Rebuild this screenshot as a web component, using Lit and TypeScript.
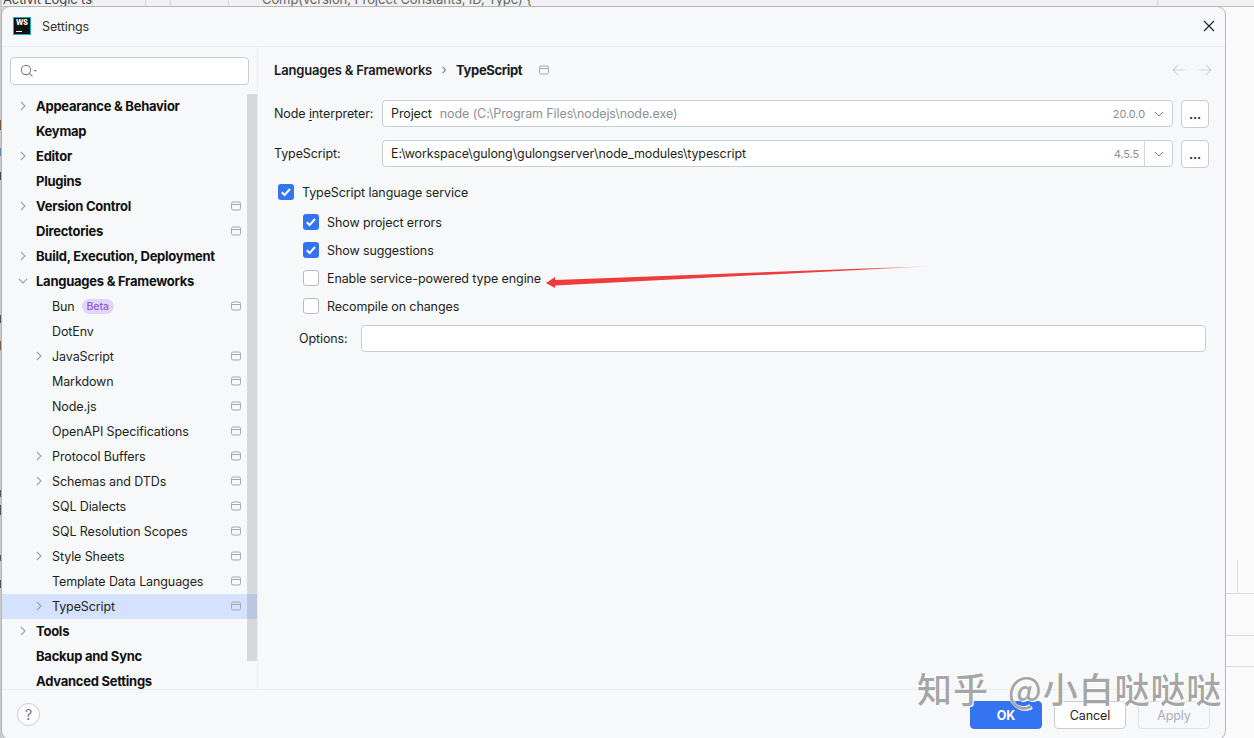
import { LitElement, html, css, svg } from "lit";
import { customElement } from "lit/decorators.js";

type Row = { t: string; lvl: 0 | 1; arrow?: "r" | "d"; icon?: boolean; beta?: boolean; sel?: boolean };

const ROWS: Row[] = [
  { t: "Appearance & Behavior", lvl: 0, arrow: "r" },
  { t: "Keymap", lvl: 0 },
  { t: "Editor", lvl: 0, arrow: "r" },
  { t: "Plugins", lvl: 0 },
  { t: "Version Control", lvl: 0, arrow: "r", icon: true },
  { t: "Directories", lvl: 0, icon: true },
  { t: "Build, Execution, Deployment", lvl: 0, arrow: "r" },
  { t: "Languages & Frameworks", lvl: 0, arrow: "d" },
  { t: "Bun", lvl: 1, icon: true, beta: true },
  { t: "DotEnv", lvl: 1 },
  { t: "JavaScript", lvl: 1, arrow: "r", icon: true },
  { t: "Markdown", lvl: 1, icon: true },
  { t: "Node.js", lvl: 1, icon: true },
  { t: "OpenAPI Specifications", lvl: 1, icon: true },
  { t: "Protocol Buffers", lvl: 1, arrow: "r", icon: true },
  { t: "Schemas and DTDs", lvl: 1, arrow: "r", icon: true },
  { t: "SQL Dialects", lvl: 1, icon: true },
  { t: "SQL Resolution Scopes", lvl: 1, icon: true },
  { t: "Style Sheets", lvl: 1, arrow: "r", icon: true },
  { t: "Template Data Languages", lvl: 1, icon: true },
  { t: "TypeScript", lvl: 1, arrow: "r", icon: true, sel: true },
  { t: "Tools", lvl: 0, arrow: "r" },
  { t: "Backup and Sync", lvl: 0 },
  { t: "Advanced Settings", lvl: 0 },
];

const TICKS: [number, number, string][] = [
  [120, 10, "#7a5a3a"],
  [148, 8, "#5f8bb0"],
  [172, 8, "#444"],
  [315, 8, "#555"],
  [341, 9, "#8a5a40"],
  [490, 7, "#555"],
  [505, 10, "#555"],
  [555, 6, "#555"],
  [580, 8, "#555"],
];

const chevR = svg`<svg width="10" height="10" viewBox="0 0 10 10" fill="none" stroke="#9da0a8" stroke-width="1.1"><path d="M3 1l4 4-4 4"/></svg>`;
const chevD = svg`<svg width="10" height="10" viewBox="0 0 10 10" fill="none" stroke="#9da0a8" stroke-width="1.1"><path d="M1 3l4 4 4-4"/></svg>`;
const proj = svg`<svg width="10" height="10" viewBox="0 0 10 10" fill="none" stroke="#a4a7ad" stroke-width="1"><rect x="0.5" y="1" width="9" height="8" rx="1.5"/><path d="M0.5 3.5h9"/></svg>`;
const check = svg`<svg width="16" height="16" viewBox="0 0 16 16" fill="none" stroke="#fff" stroke-width="2"><path d="M3.8 8.2l2.8 2.8 5.4-6"/></svg>`;
const combo = svg`<svg width="10" height="10" viewBox="0 0 10 10" fill="none" stroke="#7d8087" stroke-width="1"><path d="M1 3l4 4 4-4"/></svg>`;

@customElement("app-root")
export class AppRoot extends LitElement {
  static styles = css`
    :host {
      display: block;
      width: 1254px;
      height: 738px;
      overflow: hidden;
      font-family: "Inter", "Noto Sans", sans-serif;
      font-size: 12.5px;
      letter-spacing: -0.1px;
      color: #1e1f22;
    }
    svg { display: block; }
    .desk {
      position: relative;
      width: 1254px;
      height: 738px;
      overflow: hidden;
      background: linear-gradient(90deg, #d4d4d4 0, #ececec 14px, #fafafa 29px);
    }
    .strip {
      position: absolute;
      left: 0;
      top: 0;
      width: 1254px;
      height: 7px;
      background: #f1f1f1;
      border-bottom: 1px solid #bdbdbd;
      box-sizing: border-box;
      overflow: hidden;
    }
    .strip span {
      position: absolute;
      top: -9px;
      font-size: 13px;
      color: #444;
      white-space: nowrap;
    }
    .strip .a { left: 3px; }
    .strip .b { left: 262px; color: #666; }
    .strip i {
      position: absolute;
      top: 0;
      width: 1px;
      height: 7px;
      background: #d8d8d8;
    }
    .rowline {
      position: absolute;
      left: 1226px;
      width: 28px;
      height: 1px;
      background: #dadada;
    }
    .vline {
      position: absolute;
      left: 1237px;
      top: 560px;
      width: 1px;
      height: 33px;
      background: #dadada;
    }
    .leftedge {
      position: absolute;
      left: 0;
      top: 0;
      width: 2px;
      height: 738px;
      background: #c9c9c9;
    }
    .tick {
      position: absolute;
      left: 0;
      width: 1px;
    }
    .dialog {
      position: absolute;
      left: 2px;
      top: 7px;
      width: 1223px;
      height: 732px;
      box-sizing: border-box;
      background: #f7f8fa;
      border-radius: 8px;
      box-shadow: 0 0 0 1px #b4b6ba;
      display: flex;
      flex-direction: column;
    }
    .title {
      height: 40px;
      flex: none;
      box-sizing: border-box;
      display: flex;
      align-items: center;
      padding: 0 8px 1px 12px;
      border-bottom: 1px solid #ebecf0;
    }
    .logo {
      width: 16px;
      height: 16px;
      background: #111;
      box-shadow: 0 0 0 1px #20a9c9;
      color: #fff;
      font-size: 7px;
      font-weight: 800;
      line-height: 9px;
      padding-left: 2px;
      box-sizing: border-box;
      position: relative;
      letter-spacing: -0.2px;
      flex: none;
    }
    .logo i {
      position: absolute;
      left: 2px;
      bottom: 2px;
      width: 6px;
      height: 1px;
      background: #fff;
    }
    .title .name {
      margin-left: 12px;
      flex: 1;
      color: #333;
    }
    .x { width: 12px; height: 12px; margin-right: 2px; }
    .body {
      flex: none;
      height: 642px;
      display: flex;
    }
    .side {
      width: 256px;
      flex: none;
      box-sizing: border-box;
      border-right: 1px solid #ebecf0;
      display: flex;
      flex-direction: column;
      position: relative;
      overflow: hidden;
    }
    .search {
      margin: 10px 8px 0 8px;
      height: 28px;
      flex: none;
      box-sizing: border-box;
      width: 239px;
      background: #fff;
      border: 1px solid #c9ccd6;
      border-radius: 4px;
      display: flex;
      align-items: center;
      padding-left: 9px;
    }
    .tree { margin-top: 9px; position: relative; }
    .row {
      height: 25px;
      box-sizing: border-box;
      padding-bottom: 1px;
      display: flex;
      align-items: center;
      position: relative;
      white-space: nowrap;
    }
    .row.sel { background: #d4e2ff; }
    .row .arr {
      position: absolute;
      top: 7px;
      width: 10px;
      height: 10px;
      display: block;
    }
    .row.l0 .arr { left: 16px; }
    .row.l1 .arr { left: 32px; }
    .row.l0 .txt { margin-left: 34px; font-weight: 700; font-size: 13px; letter-spacing: -0.25px; color: #111; }
    .row.l1 .txt { margin-left: 50px; }
    .beta {
      margin-left: 7px;
      width: 32px;
      text-align: center;
      background: #e3d5f8;
      color: #8a5cd0;
      font-size: 10.5px;
      font-weight: 500;
      border-radius: 8px;
      height: 15px;
      line-height: 15px;
    }
    .row .pi { position: absolute; left: 229px; top: 7px; display: block; }
    .thumb {
      position: absolute;
      left: 245px;
      top: 0;
      width: 10px;
      height: 567px;
      background: rgba(100, 105, 115, 0.22);
    }
    .main {
      flex: 1;
      position: relative;
      padding: 0 16px;
      box-sizing: border-box;
      min-width: 0;
    }
    .crumb {
      height: 53px;
      box-sizing: border-box;
      padding-top: 15px;
    }
    .crumbin {
      height: 16px;
      display: flex;
      align-items: center;
      font-weight: 700;
      font-size: 13px;
      letter-spacing: -0.18px;
      color: #1a1b1e;
    }
    .crumbin .lang { font-weight: 600; }
    .crumbin .sep { margin: 0 9px; flex: none; }
    .crumbin .cur { letter-spacing: -0.35px; }
    .crumbin .pi { margin-left: 17px; }
    .crumbin .nav { margin-left: auto; margin-right: -3px; display: flex; gap: 12px; }
    .field {
      display: flex;
      align-items: center;
      height: 27px;
      margin-bottom: 13px;
      width: 935px;
    }
    .lab { width: 108px; flex: none; }
    .lab u { text-underline-offset: 2px; }
    .inp {
      flex: none;
      width: 791px;
      height: 27px;
      box-sizing: border-box;
      background: #fff;
      border: 1px solid #c9ccd6;
      border-radius: 4px;
      display: flex;
      align-items: center;
      padding-left: 8px;
      white-space: nowrap;
    }
    .inp .dim { color: #8c8f96; margin-left: 8px; }
    .inp .ver { margin-left: auto; color: #8c8f96; font-size: 11px; }
    .inp .ch { display: block; margin: 0 8px 0 9px; }
    .inp .sp { width: 27px; height: 25px; border-left: 1px solid #d3d5db; margin-left: 5px; display: flex; align-items: center; justify-content: center; flex: none; }
    .dots {
      margin-left: 8px;
      width: 28px;
      height: 28px;
      box-sizing: border-box;
      background: #fff;
      border: 1px solid #c9ccd6;
      border-radius: 4px;
      text-align: center;
      font-size: 13px;
      line-height: 26px;
      font-weight: 600;
    }
    .checks { margin-top: -3px; }
    .cb { display: flex; align-items: center; height: 28px; }
    .cb.top { margin: 0 0 1px 4px; height: 30px; }
    .cb.sub { margin-left: 29px; }
    .box {
      width: 16px;
      height: 16px;
      box-sizing: border-box;
      border-radius: 3px;
      background: #fff;
      border: 1px solid #b9bcc3;
      margin-right: 8px;
      flex: none;
    }
    .box.on { background: #3574f0; border: none; }
    .opts { display: flex; align-items: center; margin: 5px 0 0 25px; height: 27px; }
    .opts .lab2 { width: 62px; flex: none; }
    .opts .inp { width: 845px; }
    .arrow { position: absolute; left: 285px; top: 218px; pointer-events: none; }
    .foot {
      flex: none;
      height: 50px;
      border-top: 1px solid #ebecf0;
      display: flex;
      align-items: center;
      padding: 0 15px;
      box-sizing: border-box;
      position: relative;
    }
    .help {
      width: 23px;
      height: 23px;
      box-sizing: border-box;
      border-radius: 50%;
      border: 1px solid #c9ccd6;
      background: #fff;
      color: #6c707e;
      text-align: center;
      line-height: 21px;
      font-size: 14px;
      flex: none;
    }
    .btns { margin-left: auto; display: flex; gap: 12px; }
    .btn {
      width: 72px;
      height: 28px;
      box-sizing: border-box;
      border-radius: 4px;
      border: 1px solid #c9ccd6;
      background: #fff;
      text-align: center;
      line-height: 27px;
    }
    .btn.ok { background: #3574f0; border-color: #3574f0; color: #fff; font-weight: 700; }
    .btn.off { background: transparent; border-color: #dfe1e5; color: #a8adbd; }
    .mark {
      position: absolute;
      left: 917px;
      top: 670px;
      font-family: "Noto Sans CJK SC", sans-serif;
      font-size: 35px;
      font-weight: 500;
      line-height: 36px;
      white-space: nowrap;
      color: rgba(150, 150, 150, 0.85);
      text-shadow: 1px 1px 0 #fff, -1px -1px 0 rgba(255, 255, 255, 0.9);
      letter-spacing: 0.9px;
      pointer-events: none;
    }
    .mark .at { margin-left: 19px; }
  `;

  private row(r: Row) {
    return html`<div class="row l${r.lvl} ${r.sel ? "sel" : ""}">
      ${r.arrow ? html`<span class="arr">${r.arrow === "r" ? chevR : chevD}</span>` : ""}
      <span class="txt">${r.t}</span>
      ${r.beta ? html`<span class="beta">Beta</span>` : ""}
      ${r.icon ? html`<span class="pi">${proj}</span>` : ""}
    </div>`;
  }

  private cb(label: string, on: boolean) {
    return html`<div class="cb sub"><span class="box ${on ? "on" : ""}">${on ? check : ""}</span>${label}</div>`;
  }

  render() {
    return html`<div class="desk">
      <div class="strip">
        <span class="a">Activit Logic ts</span><span class="b">Comp(version, Project Constants, ID, Type) {</span>
        <i style="left:92px"></i><i style="left:145px"></i><i style="left:170px"></i><i style="left:228px"></i><i style="left:1157px"></i>
      </div>
      <div class="leftedge"></div>
      ${TICKS.map(([y, h, c]) => html`<div class="tick" style="top:${y}px;height:${h}px;background:${c}"></div>`)}
      <div class="vline"></div>
      <div class="rowline" style="top:593px"></div>
      <div class="rowline" style="top:635px"></div>
      <div class="rowline" style="top:666px"></div>
      <div class="dialog">
        <div class="title">
          <div class="logo">WS<i></i></div>
          <span class="name">Settings</span>
          <svg class="x" viewBox="0 0 12 12" fill="none" stroke="#1e1f22" stroke-width="1.1"><path d="M1 1l10 10M11 1L1 11"/></svg>
        </div>
        <div class="body">
          <div class="side">
            <div class="search">
              <svg width="20" height="14" viewBox="0 0 20 14" fill="none" stroke="#7d8087" stroke-width="1.1"><circle cx="6" cy="6" r="4.6"/><path d="M9.4 9.4l3 3"/><path d="M13.5 6h3.5l-1.75 1.8z" fill="#7d8087" stroke="none"/></svg>
            </div>
            <div class="tree">
              ${ROWS.map((r) => this.row(r))}
              <div class="thumb"></div>
            </div>
          </div>
          <div class="main">
            <div class="crumb">
              <div class="crumbin">
                <span class="lang">Languages &amp; Frameworks</span>
                <svg class="sep" width="6" height="8" viewBox="0 0 6 8" fill="none" stroke="#44474d" stroke-width="1"><path d="M1.5 0.8l3 3.2-3 3.2"/></svg>
                <span class="cur">TypeScript</span>
                <span class="pi">${proj}</span>
                <span class="nav">
                  <svg width="14" height="12" viewBox="0 0 14 12" fill="none" stroke="#d3d5db" stroke-width="1.2"><path d="M13 6H1M6 1L1 6l5 5"/></svg>
                  <svg width="14" height="12" viewBox="0 0 14 12" fill="none" stroke="#d3d5db" stroke-width="1.2"><path d="M1 6h12M8 1l5 5-5 5"/></svg>
                </span>
              </div>
            </div>
            <div class="field">
              <span class="lab">Node <u>i</u>nterpreter:</span>
              <div class="inp">Project<span class="dim">node (C:\\Program Files\\nodejs\\node.exe)</span><span class="ver">20.0.0</span><span class="ch">${combo}</span></div>
              <div class="dots">...</div>
            </div>
            <div class="field">
              <span class="lab">TypeScript:</span>
              <div class="inp">E:\\workspace\\gulong\\gulongserver\\node_modules\\typescript<span class="ver">4.5.5</span><span class="sp">${combo}</span></div>
              <div class="dots">...</div>
            </div>
            <div class="checks">
              <div class="cb top"><span class="box on">${check}</span>TypeScript language service</div>
              ${this.cb("Show project errors", true)}
              ${this.cb("Show suggestions", true)}
              ${this.cb("Enable service-powered type engine", false)}
              ${this.cb("Recompile on changes", false)}
            </div>
            <div class="opts"><span class="lab2">Options:</span><div class="inp"></div></div>
            <svg class="arrow" width="400" height="30" viewBox="0 0 400 30" fill="none">
              <defs>
                <linearGradient id="fade" x1="0" x2="1" y1="0" y2="0">
                  <stop offset="0" stop-color="#ee3b3b"/>
                  <stop offset="0.82" stop-color="#ee3b3b"/>
                  <stop offset="1" stop-color="#ee3b3b" stop-opacity="0.1"/>
                </linearGradient>
              </defs>
              <path d="M3 18L12 12 12 15 392 1 12 20.5 12 23z" fill="url(#fade)"/>
            </svg>
          </div>
        </div>
        <div class="foot">
          <div class="help">?</div>
          <div class="btns">
            <div class="btn ok">OK</div>
            <div class="btn">Cancel</div>
            <div class="btn off">Apply</div>
          </div>
        </div>
      </div>
      <div class="mark">知乎<span class="at">@小白哒哒哒</span></div>
    </div>`;
  }
}
